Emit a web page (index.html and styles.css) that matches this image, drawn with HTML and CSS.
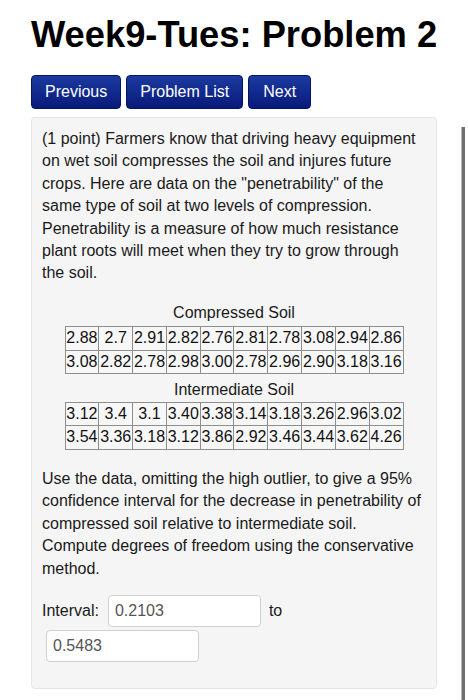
FILE: index.html
```html
<!DOCTYPE html>
<html>
<head>
<meta charset="utf-8">
<link rel="stylesheet" href="styles.css">
</head>
<body>
<div class="page">
  <h1 class="title">Week9-Tues: Problem 2</h1>
  <div class="nav">
    <a class="btn">Previous</a>
    <a class="btn">Problem List</a>
    <a class="btn">Next</a>
  </div>
  <div class="well">
    <p class="text">(1 point) Farmers know that driving heavy equipment on wet soil compresses the soil and injures future crops. Here are data on the "penetrability" of the same type of soil at two levels of compression. Penetrability is a measure of how much resistance plant roots will meet when they try to grow through the soil.</p>
    <div class="data">
      <div class="caption">Compressed Soil</div>
      <table class="grid">
        <tr><td>2.88</td><td>2.7</td><td>2.91</td><td>2.82</td><td>2.76</td><td>2.81</td><td>2.78</td><td>3.08</td><td>2.94</td><td>2.86</td></tr>
        <tr><td>3.08</td><td>2.82</td><td>2.78</td><td>2.98</td><td>3.00</td><td>2.78</td><td>2.96</td><td>2.90</td><td>3.18</td><td>3.16</td></tr>
      </table>
      <div class="caption second">Intermediate Soil</div>
      <table class="grid">
        <tr><td>3.12</td><td>3.4</td><td>3.1</td><td>3.40</td><td>3.38</td><td>3.14</td><td>3.18</td><td>3.26</td><td>2.96</td><td>3.02</td></tr>
        <tr><td>3.54</td><td>3.36</td><td>3.18</td><td>3.12</td><td>3.86</td><td>2.92</td><td>3.46</td><td>3.44</td><td>3.62</td><td>4.26</td></tr>
      </table>
    </div>
    <p class="text after">Use the data, omitting the high outlier, to give a 95% confidence interval for the decrease in penetrability of compressed soil relative to intermediate soil. Compute degrees of freedom using the conservative method.</p>
    <div class="answer">
      <span class="label">Interval:</span><input class="field first" type="text" value="0.2103"><span class="to">to</span>
      <input class="field second" type="text" value="0.5483">
    </div>
  </div>
</div>
<div class="scrollbar"></div>
</body>
</html>
```

FILE: styles.css
```css
html, body {
  margin: 0;
  padding: 0;
  background: #ffffff;
}
body {
  font-family: "Liberation Sans", Arial, sans-serif;
  color: #1a1a1a;
  font-size: 16px;
}
.page {
  padding: 0 31px 0 31px;
}
.title {
  margin: 0;
  padding-top: 15px;
  font-size: 36.3px;
  line-height: 40px;
  font-weight: bold;
  color: #000;
  white-space: nowrap;
}
.nav {
  display: flex;
  gap: 5px;
  margin-top: 20px;
}
.btn {
  display: flex;
  align-items: center;
  height: 34px;
  box-sizing: border-box;
  padding: 0 13px;
  font-size: 16px;
  color: #ffffff;
  background: linear-gradient(#1b3a9f, #081a7a);
  border: 1px solid #071560;
  border-radius: 4px;
}
.btn:last-child {
  padding: 0 14px;
}
.well {
  margin-top: 8px;
  background: #f5f5f5;
  border: 1px solid #e6e6e6;
  border-radius: 4px;
  padding: 10px 13px 26px 10px;
  min-height: 572px;
  box-sizing: border-box;
}
.text {
  margin: 0;
  line-height: 22.4px;
  color: #1a1a1a;
}
.text.after {
  margin-top: 18px;
}
.data {
  margin-top: 17px;
  display: flex;
  flex-direction: column;
  align-items: center;
  margin-left: 3px;
}
.caption {
  line-height: 22.4px;
  color: #1a1a1a;
  margin-bottom: 2px;
}
.caption.second {
  margin-top: 5px;
  margin-bottom: 0;
}
.grid {
  border-collapse: collapse;
  border: 1px solid #7a7a7a;
  background: #f7f7f7;
  table-layout: fixed;
  width: 339px;
}
.grid td {
  border: 1px solid #8e8e8e;
  padding: 0;
  text-align: center;
  line-height: 22.6px;
  font-size: 16px;
  color: #111;
  white-space: nowrap;
  overflow: hidden;
}
.answer {
  margin-top: 15px;
  line-height: 32px;
}
.label {
  margin-right: 9px;
}
.field {
  box-sizing: border-box;
  width: 153px;
  height: 32px;
  border: 1px solid #d0d0d0;
  border-radius: 4px;
  background: #ffffff;
  padding: 0 6px;
  font-family: "Liberation Sans", Arial, sans-serif;
  font-size: 16px;
  color: #555;
  vertical-align: top;
  margin: 0;
}
.to {
  margin-left: 8px;
}
.field.second {
  display: block;
  margin: 3px 0 0 4px;
}
.scrollbar {
  position: absolute;
  left: 461px;
  top: 127px;
  width: 3px;
  height: 573px;
  background: #6f6f6f;
  border-left: 1px solid #b5b5b5;
}
```
